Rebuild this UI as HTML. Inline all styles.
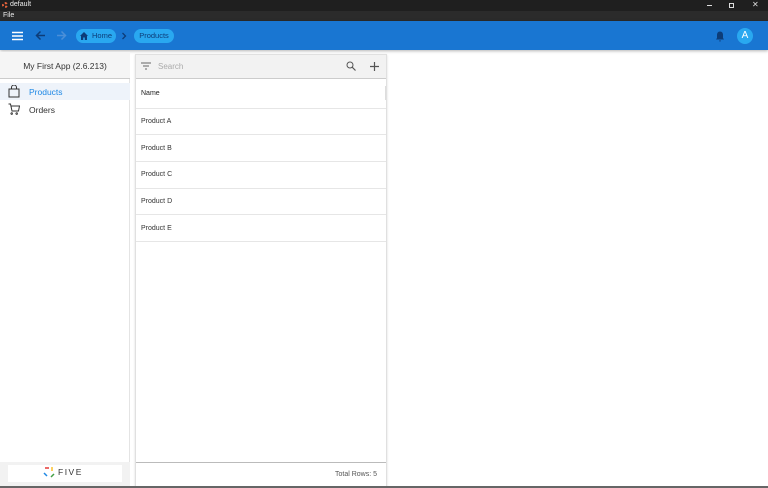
<!DOCTYPE html>
<html><head><style>
*{margin:0;padding:0;box-sizing:border-box}
body{width:768px;height:488px;overflow:hidden;background:#fff;font-family:"Liberation Sans",sans-serif;position:relative}
.abs{position:absolute}
</style></head><body>
<div class="abs" style="left:0;top:0;width:768px;height:11px;background:#1f1f1f"></div>
<div class="abs" style="left:2px;top:2px;width:6px;height:6px;border:2px dotted #e8643c;border-radius:50%"></div>
<div class="abs" style="left:10px;top:1px;font-size:7px;color:#eee">default</div>
<div class="abs" style="left:707px;top:5px;width:5px;height:1px;background:#ddd"></div>
<div class="abs" style="left:729px;top:3px;width:5px;height:5px;border:1px solid #ddd"></div>
<div class="abs" style="left:752px;top:0px;font-size:8px;color:#ddd">✕</div>
<div class="abs" style="left:0;top:11px;width:768px;height:10px;background:#2b2b2b"></div>
<div class="abs" style="left:3px;top:12px;font-size:7px;color:#eee">File</div>
<div class="abs" style="left:0;top:21px;width:768px;height:29px;background:#1976d2;box-shadow:0 1px 3px rgba(0,0,0,.3)"></div>
<svg class="abs" style="left:12px;top:31px" width="12" height="10"><path d="M0 1.5h11M0 5h11M0 8.5h11" stroke="#fff" stroke-width="1.5"/></svg>
<svg class="abs" style="left:35px;top:30px" width="12" height="12"><path d="M10 5.5H2M5.5 1.5L1.5 5.5l4 4" stroke="#0d3c78" stroke-width="1.5" fill="none"/></svg>
<svg class="abs" style="left:56px;top:30px" width="12" height="12"><path d="M1 5.5h8M5.5 1.5l4 4-4 4" stroke="#4b8fd8" stroke-width="1.5" fill="none"/></svg>
<div class="abs" style="left:76px;top:29px;width:40px;height:14px;background:#29a8f0;border-radius:7px"></div>
<svg class="abs" style="left:80px;top:32px" width="8" height="8"><path d="M4 0L0 4h1v4h2.2V5.5h1.6V8H7V4h1z" fill="#0d3c78"/></svg>
<div class="abs" style="left:92px;top:29px;font-size:7.5px;line-height:14px;color:#0d3c78">Home</div>
<svg class="abs" style="left:121px;top:32px" width="6" height="8"><path d="M1.5 1l3 3-3 3" stroke="#0d3c78" stroke-width="1.3" fill="none"/></svg>
<div class="abs" style="left:134px;top:29px;width:40px;height:14px;background:#29a8f0;border-radius:7px;font-size:7.5px;line-height:14px;color:#0d3c78;text-align:center">Products</div>
<svg class="abs" style="left:715px;top:31px" width="10" height="11"><path d="M5 0.5C3 .5 2 2 2 4v3L1 8.5h8L8 7V4C8 2 7 .5 5 .5zM4 9.5h2a1 1 0 01-2 0z" fill="#0d3c78"/></svg>
<div class="abs" style="left:737px;top:28px;width:16px;height:16px;border-radius:50%;background:#29a8f0;color:#fff;font-size:10px;text-align:center;line-height:16px">A</div>
<!-- sidebar -->
<div class="abs" style="left:0;top:52px;width:130px;height:436px;background:#fff;border-right:1px solid #e4e4e4"></div>
<div class="abs" style="left:0;top:52px;width:130px;height:27px;background:#f5f5f5;border-bottom:1px solid #ccc;font-size:8.5px;color:#333;text-align:center;line-height:29px">My First App (2.6.213)</div>
<div class="abs" style="left:0;top:83px;width:130px;height:17px;background:#eef3fa"></div>
<svg class="abs" style="left:8px;top:85px" width="12" height="13"><path d="M1 4h10v8H1z M3.5 4V2.5a2.5 2.5 0 015 0V4" stroke="#333" stroke-width="1" fill="none"/></svg>
<div class="abs" style="left:29px;top:87px;font-size:8.5px;color:#1e88e5">Products</div>
<svg class="abs" style="left:8px;top:103px" width="12" height="12"><path d="M0.5 1h2l1.5 7h6.5l1-5H3M4.5 10.5a.8.8 0 100 .1M9.5 10.5a.8.8 0 100 .1" stroke="#333" stroke-width="1" fill="none"/></svg>
<div class="abs" style="left:29px;top:105px;font-size:8.5px;color:#333">Orders</div>
<div class="abs" style="left:0;top:462px;width:130px;height:25px;background:#f2f2f2"></div>
<div class="abs" style="left:8px;top:465px;width:114px;height:17px;background:#fff"></div>
<svg class="abs" style="left:43px;top:466px" width="12" height="12"><path d="M2 2h4" stroke-width="1.5" stroke="#e53935"/><path d="M9 1v4" stroke="#fbc02d" stroke-width="1.5"/><path d="M11 8l-3 3" stroke="#43a047" stroke-width="1.5"/><path d="M1 7l3 3" stroke="#1e88e5" stroke-width="1.5"/></svg>
<div class="abs" style="left:58px;top:467px;font-size:8.5px;letter-spacing:1.5px;color:#333">FIVE</div>
<!-- panel -->
<div class="abs" style="left:135px;top:54px;width:252px;height:434px;background:#fff;border:1px solid #e0e0e0;box-shadow:0 1px 2px rgba(0,0,0,.15)"></div>
<div class="abs" style="left:136px;top:55px;width:250px;height:24px;background:#f2f2f2;border-bottom:1px solid #ccc"></div>
<svg class="abs" style="left:141px;top:62px" width="10" height="8"><path d="M0 1h10M2 4h6M4 7h2" stroke="#666" stroke-width="1"/></svg>
<div class="abs" style="left:158px;top:62px;font-size:8px;color:#aaa">Search</div>
<svg class="abs" style="left:346px;top:61px" width="10" height="10"><circle cx="4" cy="4" r="3" stroke="#555" fill="none"/><path d="M6.2 6.2l3.3 3.3" stroke="#555" stroke-width="1.2"/></svg>
<svg class="abs" style="left:370px;top:62px" width="9" height="9"><path d="M4.5 0v9M0 4.5h9" stroke="#555" stroke-width="1.2"/></svg>
<div class="abs" style="left:141px;top:90px;font-size:7px;color:#222">Name</div>
<div class="abs" style="left:385px;top:86px;width:1px;height:14px;background:#ddd"></div>
<div class="abs" style="left:136px;top:108px;width:250px;border-top:1px solid #e6e6e6"></div>
<div class="abs" style="left:141px;top:118px;font-size:7px;color:#333">Product A</div>
<div class="abs" style="left:136px;top:134px;width:250px;border-top:1px solid #e6e6e6"></div>
<div class="abs" style="left:141px;top:145px;font-size:7px;color:#333">Product B</div>
<div class="abs" style="left:136px;top:161px;width:250px;border-top:1px solid #e6e6e6"></div>
<div class="abs" style="left:141px;top:171px;font-size:7px;color:#333">Product C</div>
<div class="abs" style="left:136px;top:188px;width:250px;border-top:1px solid #e6e6e6"></div>
<div class="abs" style="left:141px;top:198px;font-size:7px;color:#333">Product D</div>
<div class="abs" style="left:136px;top:214px;width:250px;border-top:1px solid #e6e6e6"></div>
<div class="abs" style="left:141px;top:225px;font-size:7px;color:#333">Product E</div>
<div class="abs" style="left:136px;top:241px;width:250px;border-top:1px solid #e6e6e6"></div>
<div class="abs" style="left:136px;top:462px;width:250px;border-top:1px solid #bbb"></div>
<div class="abs" style="left:335px;top:471px;font-size:7px;color:#555">Total Rows: 5</div>
<div class="abs" style="left:0;top:486px;width:768px;height:2px;background:#666"></div>
</body></html>
